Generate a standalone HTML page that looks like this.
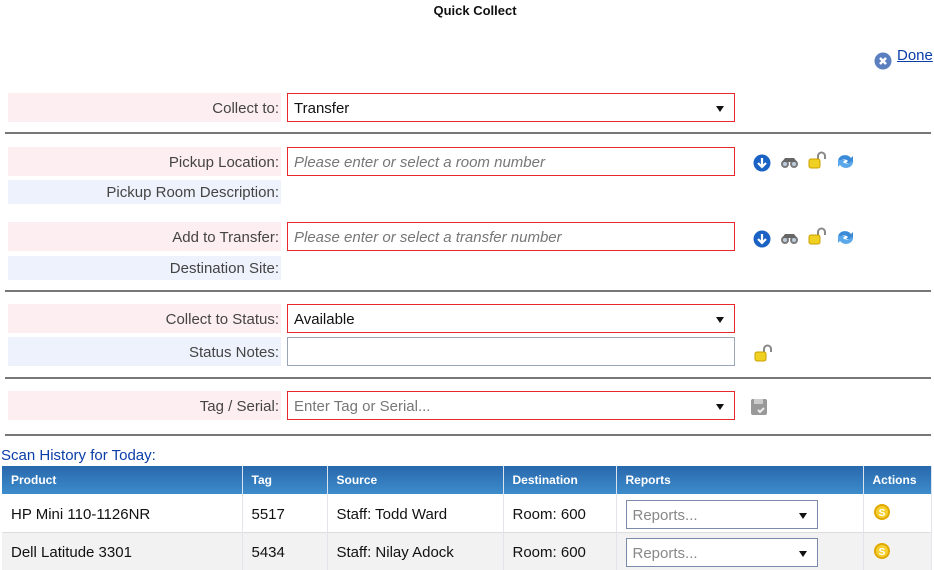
<!DOCTYPE html>
<html><head><meta charset="utf-8">
<style>
*{box-sizing:border-box;margin:0;padding:0}
body{width:934px;height:568px;overflow:hidden;background:#fff;font-family:"Liberation Sans",sans-serif;position:relative;color:#444}
.a{position:absolute}
.lbl{position:absolute;left:8px;width:273px;text-align:right;padding-right:2px;font-size:15px;line-height:31px;height:29px;color:#444}
.pk{background:#fdeef1}
.bl{background:#eef2fc}
.inp{position:absolute;left:287px;width:448px;height:29px;border:1px solid #e8282a;font-size:15px;line-height:29px;padding-left:6px;color:#111;background:#fff}
.ph{color:#777;font-style:italic}
.hr{position:absolute;left:5px;width:926px;height:2px;background:#777}
.arr{position:absolute;right:10px;top:12px;width:0;height:0;border-left:4px solid transparent;border-right:4px solid transparent;border-top:6px solid #111}
table{position:absolute;left:2px;top:466px;width:930px;border-collapse:collapse;font-size:15px}
th{background:linear-gradient(#2868ac,#3d8ccc);color:#fff;font-size:12px;text-align:left;padding-left:9px;height:28px;border-right:1px solid #dbe4ee;font-weight:bold}
td{height:38px;padding-left:9px;padding-top:3px;color:#111;border-right:1px solid #e2e6ea}
tr.r2 td{background:#f2f2f2;border-top:1px solid #ddd}
.sel{position:relative;width:192px;height:29px;border:1px solid #7a8aa8;background:#fff;color:#888;line-height:30px;padding-left:6px;font-size:15px}
.ic{position:absolute}
</style></head><body>
<div class="a" style="left:0;width:934px;top:3px;text-align:center;font-weight:bold;font-size:13px;color:#111;padding-left:16px">Quick Collect</div>
<svg class="a" style="left:874px;top:52px" width="18" height="18" viewBox="0 0 18 18"><circle cx="9" cy="9" r="8.5" fill="#5b7fbf"/><path d="M6 6l6 6M12 6l-6 6" stroke="#fff" stroke-width="2.5"/></svg>
<div class="a" style="left:897px;top:47px;font-size:15px;color:#0b3ea8;text-decoration:underline">Done</div>

<div class="lbl pk" style="top:93px">Collect to:</div>
<div class="inp" style="top:93px">Transfer<span class="arr"></span></div>
<div class="hr" style="top:132px"></div>

<div class="lbl pk" style="top:147px">Pickup Location:</div>
<div class="inp ph" style="top:147px">Please enter or select a room number</div>
<div class="lbl bl" style="top:180px;height:24px;line-height:26px">Pickup Room Description:</div>

<div class="lbl pk" style="top:222px">Add to Transfer:</div>
<div class="inp ph" style="top:222px">Please enter or select a transfer number</div>
<div class="lbl bl" style="top:256px;height:24px;line-height:26px">Destination Site:</div>
<div class="hr" style="top:290px"></div>

<div class="lbl pk" style="top:304px">Collect to Status:</div>
<div class="inp" style="top:304px">Available<span class="arr"></span></div>
<div class="lbl bl" style="top:337px">Status Notes:</div>
<div class="inp" style="top:337px;border-color:#9aa6b8"></div>
<div class="hr" style="top:377px"></div>

<div class="lbl pk" style="top:391px">Tag / Serial:</div>
<div class="inp ph" style="top:391px;font-style:normal">Enter Tag or Serial...<span class="arr"></span></div>
<div class="hr" style="top:434px"></div>

<svg width="0" height="0" style="position:absolute"><defs>
<g id="dl"><circle cx="9" cy="9" r="8.5" fill="#1a62c4"/><path d="M9 4v9M5 9l4 4 4-4" stroke="#fff" stroke-width="2.2" fill="none"/></g>
<g id="bino"><circle cx="5" cy="11" r="4" fill="#7a7a7a"/><circle cx="14" cy="11" r="4" fill="#7a7a7a"/><circle cx="5" cy="11" r="2" fill="#bcd"/><circle cx="14" cy="11" r="2" fill="#bcd"/><path d="M2 9l3-4h9l3 4z" fill="#666"/></g>
<g id="lock"><path d="M10 9V5a3.5 3.5 0 0 1 7 0v3" stroke="#888" stroke-width="2" fill="none"/><rect x="1" y="8" width="11" height="9" rx="2" fill="#f0d020" stroke="#c9a000"/></g>
<g id="ref"><path d="M2 9a7 6 0 0 1 13-3l2-2v7h-7l2-2a4.5 3.5 0 0 0-8 1z" fill="#3a8ad8"/><path d="M17 10a7 6 0 0 1-13 3l-2 2v-7h7l-2 2a4.5 3.5 0 0 0 8-1z" fill="#5aa8ea"/></g>
</defs></svg>
<svg class="ic" style="left:753px;top:154px" width="18" height="18"><use href="#dl"/></svg>
<svg class="ic" style="left:780px;top:153px" width="20" height="18"><use href="#bino"/></svg>
<svg class="ic" style="left:808px;top:151px" width="20" height="20"><use href="#lock"/></svg>
<svg class="ic" style="left:836px;top:152px" width="20" height="20"><use href="#ref"/></svg>
<svg class="ic" style="left:753px;top:230px" width="18" height="18"><use href="#dl"/></svg>
<svg class="ic" style="left:780px;top:229px" width="20" height="18"><use href="#bino"/></svg>
<svg class="ic" style="left:808px;top:227px" width="20" height="20"><use href="#lock"/></svg>
<svg class="ic" style="left:836px;top:228px" width="20" height="20"><use href="#ref"/></svg>
<svg class="ic" style="left:754px;top:344px" width="20" height="20"><use href="#lock"/></svg>
<svg class="ic" style="left:750px;top:398px" width="18" height="18"><rect x="1" y="1" width="16" height="16" rx="2" fill="#999"/><rect x="4" y="1" width="9" height="5" fill="#ccc"/><path d="M8 12l2 2 4-4" stroke="#eee" stroke-width="2" fill="none"/></svg>

<div class="a" style="left:1px;top:447px;font-size:15px;color:#0b3ea8">Scan History for Today:</div>
<table>
<tr><th style="width:240px">Product</th><th style="width:85px">Tag</th><th style="width:176px">Source</th><th style="width:113px">Destination</th><th style="width:247px">Reports</th><th>Actions</th></tr>
<tr><td>HP Mini 110-1126NR</td><td>5517</td><td>Staff: Todd Ward</td><td>Room: 600</td><td><div class="sel">Reports...<span class="arr"></span></div></td><td><svg width="18" height="18"><circle cx="9" cy="9" r="8" fill="#e0a800"/><circle cx="9" cy="9" r="6" fill="#f6d030"/><text x="9" y="13" font-size="10" text-anchor="middle" fill="#fff" font-family="Liberation Sans" font-weight="bold">S</text></svg></td></tr>
<tr class="r2"><td>Dell Latitude 3301</td><td>5434</td><td>Staff: Nilay Adock</td><td>Room: 600</td><td><div class="sel">Reports...<span class="arr"></span></div></td><td><svg width="18" height="18"><circle cx="9" cy="9" r="8" fill="#e0a800"/><circle cx="9" cy="9" r="6" fill="#f6d030"/><text x="9" y="13" font-size="10" text-anchor="middle" fill="#fff" font-family="Liberation Sans" font-weight="bold">S</text></svg></td></tr>
</table>
</body></html>
